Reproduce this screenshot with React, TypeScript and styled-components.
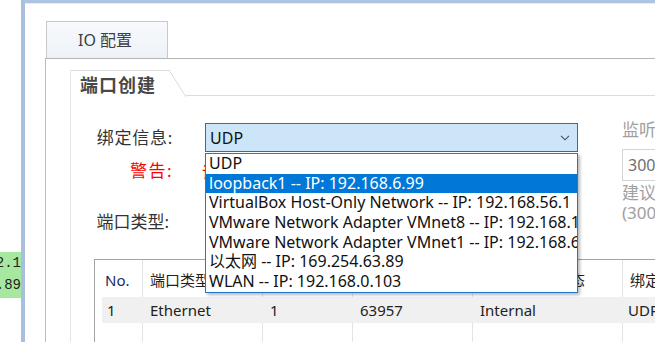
import React from 'react';
import styled, {createGlobalStyle} from 'styled-components';

const GlobalStyle = createGlobalStyle`
  html, body {
    margin: 0;
    padding: 0;
    background: #fff;
  }
  body {
    width: 655px;
    height: 342px;
    overflow: hidden;
    font-family: "Noto Sans", "Noto Sans CJK SC", sans-serif;
    color: #333;
  }
`;

const Screen = styled.div`
  display: flex;
  width: 655px;
  height: 342px;
  overflow: hidden;
`;

const SideStrip = styled.div`
  flex: none;
  width: 21px;
  padding-top: 252px;
  box-sizing: border-box;
`;

const SideLog = styled.div`
  display: flex;
  flex-direction: column;
  align-items: flex-end;
  height: 46px;
  overflow: hidden;
  background: #a6e89f;
  font-family: "Liberation Mono", monospace;
  font-size: 14px;
  line-height: 22px;
  color: #222;
  span {
    white-space: nowrap;
  }
`;

const Window = styled.div`
  flex: none;
  width: 634px;
  border-left: 4px solid #a9c0dc;
  border-top: 3px solid #abc5e3;
  box-shadow: inset 0 1px 0 #e6ebf1;
  box-sizing: border-box;
  padding: 18px 0 0 20px;
  display: flex;
  flex-direction: column;
`;

const TabStrip = styled.div`
  display: flex;
  height: 37px;
  padding-left: 1px;
`;

const Tab = styled.div`
  width: 122px;
  box-sizing: border-box;
  border: 1px solid #c6c9cd;
  border-bottom: none;
  background: linear-gradient(#f7f9fc, #eef2f7);
  padding-left: 31px;
  font-size: 16px;
  line-height: 36px;
  color: #3b3f48;
`;

const Panel = styled.div`
  flex: 1;
  border-top: 1px solid #b5b5b5;
  border-left: 1px solid #bdbdbd;
  padding: 11px 0 0 24px;
`;

const GroupBox = styled.div`
  border-left: 1px solid #e4e4e4;
  width: 700px;
`;

const GroupHead = styled.div`
  display: flex;
  height: 26px;
`;

const GroupTitle = styled.div`
  position: relative;
  flex: none;
  width: 98px;
  box-sizing: border-box;
  border-top: 1px solid #dedede;
  padding-left: 9px;
  font-size: 18px;
  font-weight: bold;
  letter-spacing: 1px;
  line-height: 29px;
  color: #484848;
  &::after {
    content: '';
    position: absolute;
    top: -1px;
    right: -17px;
    width: 17px;
    height: 27px;
    background: linear-gradient(to top right, transparent calc(50% - 0.7px), #d4d4d4 50%, transparent calc(50% + 0.7px));
  }
`;

const GroupRule = styled.div`
  flex: 1;
  margin-left: 17px;
  border-bottom: 1px solid #dcdcdc;
`;

const FormArea = styled.div`
  display: flex;
  padding-top: 27px;
`;

const Fields = styled.div`
  flex: none;
  display: flex;
  flex-direction: column;
`;

const FieldRow = styled.div<{ $h: number }>`
  display: grid;
  grid-template-columns: 105px 373px;
  column-gap: 29px;
  align-items: center;
  height: ${p => p.$h}px;
`;

const Label = styled.div<{ $warn?: boolean; $ls?: number; $pr?: number }>`
  text-align: right;
  padding-right: ${p => p.$pr ?? 3}px;
  font-size: 17px;
  letter-spacing: ${p => p.$ls ?? 0.75}px;
  line-height: 20px;
  white-space: nowrap;
  color: ${p => (p.$warn ? '#f00' : '#333')};
`;

const WarnText = styled.div`
  margin-left: -3px;
  font-size: 16px;
  color: #f00;
  white-space: nowrap;
  overflow: hidden;
`;

const ComboWrap = styled.div`
  position: relative;
  height: 29px;
`;

const Combo = styled.div`
  display: flex;
  align-items: center;
  justify-content: space-between;
  height: 29px;
  box-sizing: border-box;
  border: 1px solid #0a78d4;
  background: #cde5f8;
  padding: 0 7px 0 4px;
  font-size: 16px;
  color: #111;
`;

const DropList = styled.div`
  position: absolute;
  z-index: 10;
  top: calc(100% + 1px);
  left: 0;
  width: 373px;
  box-sizing: border-box;
  border: 1px solid #1a7bd0;
  background: #fff;
  box-shadow: 2px 2px 3px rgba(0, 0, 0, 0.28);
  overflow: hidden;
`;

const DropItem = styled.div<{ $active?: boolean }>`
  height: 19.7px;
  line-height: 19.7px;
  padding-left: 3px;
  font-size: 16px;
  white-space: nowrap;
  color: ${p => (p.$active ? '#fff' : '#111')};
  background: ${p => (p.$active ? '#0078d7' : 'transparent')};
`;

const SideCol = styled.div`
  flex: none;
  width: 120px;
  margin-left: 44px;
  display: flex;
  flex-direction: column;
  color: #a0a0a0;
  font-size: 17px;
  white-space: nowrap;
`;

const SideLine = styled.div<{ $mt: number }>`
  margin-top: ${p => p.$mt}px;
  line-height: 20px;
`;

const NumBox = styled.div`
  margin-top: 9px;
  height: 32px;
  box-sizing: border-box;
  border: 1px solid #d4d4d4;
  padding-left: 5px;
  font-size: 16px;
  line-height: 30px;
  color: #707070;
`;

const COLS = '120px 90px 120px 150px 92px';

const Table = styled.div`
  margin: 5px 0 0 23px;
  width: 621px;
  border-top: 1px solid #a3a3a3;
  border-left: 1px solid #a3a3a3;
  font-size: 15px;
`;

const HeadRow = styled.div`
  display: grid;
  grid-template-columns: 48px ${COLS};
  height: 37px;
`;

const HeadCell = styled.div<{ $pl?: number; $color?: string }>`
  border-right: 1px solid #e3e3e3;
  padding-left: ${p => p.$pl ?? 7}px;
  line-height: 41px;
  white-space: nowrap;
  overflow: hidden;
  color: ${p => p.$color ?? '#222'};
`;

const BodyRow = styled.div<{ $shade?: boolean }>`
  display: grid;
  grid-template-columns: 41px ${COLS};
  margin-left: 7px;
  height: ${p => (p.$shade ? 26 : 30)}px;
  background: ${p => (p.$shade ? '#f0f0f0' : '#fff')};
`;

const Cell = styled.div<{ $pl?: number; $line?: boolean }>`
  padding-left: ${p => p.$pl ?? 7}px;
  line-height: 26px;
  border-right: 1px solid ${p => (p.$line ? '#e3e3e3' : 'transparent')};
  white-space: nowrap;
  overflow: hidden;
  color: #222;
`;

const adapters = [
  'UDP',
  'loopback1 -- IP: 192.168.6.99',
  'VirtualBox Host-Only Network -- IP: 192.168.56.1',
  'VMware Network Adapter VMnet8 -- IP: 192.168.126.1',
  'VMware Network Adapter VMnet1 -- IP: 192.168.60.1',
  '以太网 -- IP: 169.254.63.89',
  'WLAN -- IP: 192.168.0.103',
];

const Chevron = () => (
  <svg width="10" height="6" viewBox="0 0 10 6">
    <polyline points="1,0.8 5,4.8 9,0.8" fill="none" stroke="#4a4a4a" strokeWidth="1.1" />
  </svg>
);

export default function App() {
  return (
    <Screen>
      <GlobalStyle />
      <SideStrip>
        <SideLog>
          <span>192.168.2.1</span>
          <span>169.254.63.89</span>
        </SideLog>
      </SideStrip>
      <Window>
        <TabStrip>
          <Tab>IO 配置</Tab>
        </TabStrip>
        <Panel>
          <GroupBox>
            <GroupHead>
              <GroupTitle>端口创建</GroupTitle>
              <GroupRule />
            </GroupHead>
            <FormArea>
              <Fields>
                <FieldRow $h={29}>
                  <Label>绑定信息:</Label>
                  <ComboWrap>
                    <Combo>
                      <span>UDP</span>
                      <Chevron />
                    </Combo>
                    <DropList>
                      {adapters.map((a, i) => (
                        <DropItem key={a} $active={i === 1}>{a}</DropItem>
                      ))}
                    </DropList>
                  </ComboWrap>
                </FieldRow>
                <FieldRow $h={38}>
                  <Label $warn $ls={1.5}>警告:</Label>
                  <WarnText>请选择绑定的网络适配器</WarnText>
                </FieldRow>
                <FieldRow $h={64}>
                  <Label $ls={0} $pr={7}>端口类型:</Label>
                  <div />
                </FieldRow>
              </Fields>
              <SideCol>
                <SideLine $mt={-3}>监听端口:</SideLine>
                <NumBox>3000</NumBox>
                <SideLine $mt={2}>建议端口范围</SideLine>
                <SideLine $mt={0}>(3000-65535)</SideLine>
              </SideCol>
            </FormArea>
            <Table>
              <HeadRow>
                <HeadCell $pl={10} $color="#1b2a5c">No.</HeadCell>
                <HeadCell>端口类型</HeadCell>
                <HeadCell>端口号</HeadCell>
                <HeadCell>本地端口</HeadCell>
                <HeadCell>端口的工作状态</HeadCell>
                <HeadCell>绑定信息</HeadCell>
              </HeadRow>
              <BodyRow $shade>
                <Cell $pl={5}>1</Cell>
                <Cell>Ethernet</Cell>
                <Cell>1</Cell>
                <Cell>63957</Cell>
                <Cell>Internal</Cell>
                <Cell $pl={5}>UDP</Cell>
              </BodyRow>
              <BodyRow>
                <Cell $line />
                <Cell $line />
                <Cell $line />
                <Cell $line />
                <Cell $line />
                <Cell />
              </BodyRow>
            </Table>
          </GroupBox>
        </Panel>
      </Window>
    </Screen>
  );
}
